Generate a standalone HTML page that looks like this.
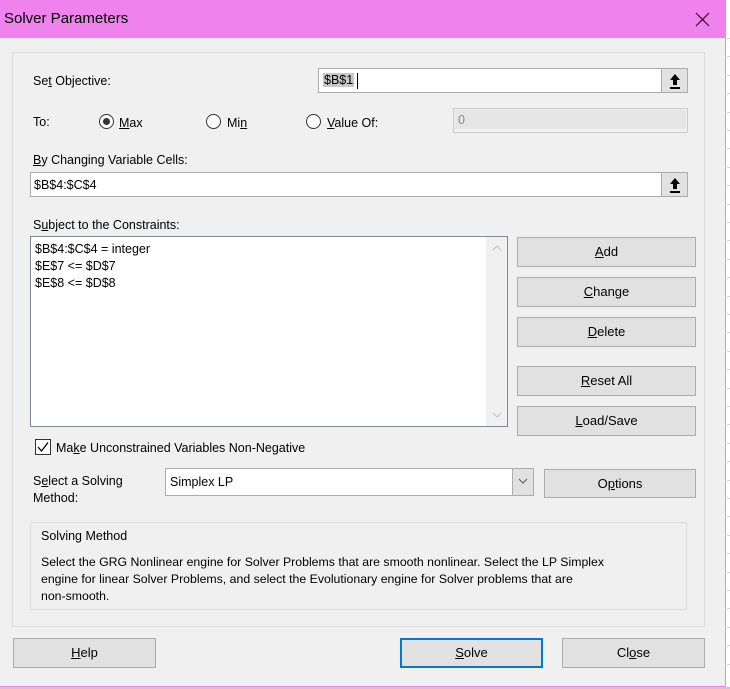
<!DOCTYPE html>
<html><head><meta charset="utf-8"><style>
*{box-sizing:border-box;margin:0;padding:0}
body{width:730px;height:689px;overflow:hidden;background:#fff;font-family:"Liberation Sans",Arial,sans-serif;font-size:12.5px;color:#000;position:relative}
.a{position:absolute}
.dlg{left:0;top:0;width:726px;height:687px;background:#f0f0f0;border-right:1px solid #ee82ee;border-bottom:1px solid #ee82ee}
.title{left:0;top:0;width:726px;height:38px;background:#ef82ec}
.btn{position:absolute;background:#e1e1e1;border:1px solid #adadad;text-align:center;font-size:13px}
.inp{position:absolute;background:#fff;border:1px solid #7a7a7a}
u{text-decoration:underline}
.radio{position:absolute;width:15px;height:15px;border:1px solid #333;border-radius:50%;background:#fff}
.up{position:absolute;right:0;top:0;width:26px;height:100%;background:#e1e1e1;border-left:1px solid #adadad}
.grid{position:absolute;left:727px;width:3px;height:1px;background:#d4d4d4}
</style></head><body>
<div class="a" style="left:0;top:687px;width:730px;height:2px;background:#c8c8c8"></div>
<div class="a dlg"></div>
<div class="a title"></div>
<div class="a" style="left:4px;top:10px;font-size:15px;color:#000">Solver Parameters</div>
<svg class="a" style="left:695px;top:12px" width="15" height="15"><path d="M1 1L14 14M14 1L1 14" stroke="#000" stroke-width="1.2"/></svg>
<div class="a" style="left:12px;top:52px;width:693px;height:575px;border:1px solid #dcdcdc"></div>

<div class="a" style="left:33px;top:74px">Se<u>t</u> Objective:</div>
<div class="inp" style="left:318px;top:68px;width:370px;height:25px;border-color:#adadad">
 <span class="a" style="left:4px;top:4px;background:#c8c8c8;padding:0 1px">$B$1</span><span class="a" style="left:38px;top:4px;width:1px;height:16px;background:#000"></span>
 <div class="up"><svg width="26" height="23"><path d="M13 5L8 11H11V16H15V11H18Z" fill="#000"/><rect x="8" y="18" width="10" height="2" fill="#000"/></svg></div></div>

<div class="a" style="left:33px;top:115px">To:</div>
<div class="radio" style="left:99px;top:114px"><div class="a" style="left:3px;top:3px;width:7px;height:7px;border-radius:50%;background:#333"></div></div>
<div class="a" style="left:119px;top:116px"><u>M</u>ax</div>
<div class="radio" style="left:206px;top:114px"></div>
<div class="a" style="left:227px;top:116px">Mi<u>n</u></div>
<div class="radio" style="left:306px;top:114px"></div>
<div class="a" style="left:327px;top:116px"><u>V</u>alue Of:</div>
<div class="a" style="left:453px;top:108px;width:235px;height:25px;border:1px solid #ccc;background:#f0f0f0"><div class="a" style="left:1px;top:1px;right:1px;bottom:3px;background:#e6e6e6"></div><span class="a" style="left:4px;top:4px;color:#8a8a8a">0</span></div>

<div class="a" style="left:33px;top:153px"><u>B</u>y Changing Variable Cells:</div>
<div class="inp" style="left:30px;top:172px;width:658px;height:25px;border-color:#adadad">
 <span class="a" style="left:3px;top:5px">$B$4:$C$4</span>
 <div class="up"><svg width="26" height="23"><path d="M13 5L8 11H11V16H15V11H18Z" fill="#000"/><rect x="8" y="18" width="10" height="2" fill="#000"/></svg></div></div>

<div class="a" style="left:33px;top:218px">S<u>u</u>bject to the Constraints:</div>
<div class="inp" style="left:30px;top:236px;width:478px;height:191px;border-color:#828790">
 <div class="a" style="left:4px;top:4px;line-height:17px">$B$4:$C$4 = integer<br>$E$7 &lt;= $D$7<br>$E$8 &lt;= $D$8</div>
 <div class="a" style="right:0;top:0;width:21px;height:100%;background:#f0f0f0"></div>
 <svg class="a" style="right:5px;top:8px" width="10" height="6"><path d="M1 5L5 1L9 5" stroke="#c0c0c0" fill="none"/></svg>
 <svg class="a" style="right:5px;bottom:8px" width="10" height="6"><path d="M1 1L5 5L9 1" stroke="#c0c0c0" fill="none"/></svg>
</div>
<div class="btn" style="left:517px;top:237px;width:179px;height:30px;line-height:28px"><u>A</u>dd</div>
<div class="btn" style="left:517px;top:277px;width:179px;height:30px;line-height:28px"><u>C</u>hange</div>
<div class="btn" style="left:517px;top:317px;width:179px;height:30px;line-height:28px"><u>D</u>elete</div>
<div class="btn" style="left:517px;top:366px;width:179px;height:30px;line-height:28px"><u>R</u>eset All</div>
<div class="btn" style="left:517px;top:406px;width:179px;height:30px;line-height:28px"><u>L</u>oad/Save</div>

<div class="a" style="left:35px;top:439px;width:16px;height:16px;border:1px solid #333;background:#fff"><svg width="14" height="14"><path d="M2 7L5.5 11L12 2.5" stroke="#000" stroke-width="1.3" fill="none"/></svg></div>
<div class="a" style="left:56px;top:441px">Ma<u>k</u>e Unconstrained Variables Non-Negative</div>

<div class="a" style="left:33px;top:473px;line-height:17px">S<u>e</u>lect a Solving<br>Method:</div>
<div class="inp" style="left:165px;top:468px;width:369px;height:28px;border-color:#adadad">
 <span class="a" style="left:4px;top:6px">Simplex LP</span>
 <div class="a" style="right:0;top:0;width:21px;height:100%;background:#e1e1e1;border-left:1px solid #adadad"><svg width="20" height="26"><path d="M6 10L10 14L14 10" stroke="#555" fill="none"/></svg></div></div>
<div class="btn" style="left:544px;top:469px;width:152px;height:29px;line-height:27px">O<u>p</u>tions</div>

<div class="a" style="left:30px;top:522px;width:657px;height:88px;border:1px solid #dcdcdc"></div>
<div class="a" style="left:41px;top:529px;font-size:12.5px">Solving Method</div>
<div class="a" style="left:41px;top:554px;font-size:12.3px;line-height:17px;white-space:nowrap">Select the GRG Nonlinear engine for Solver Problems that are smooth nonlinear. Select the LP Simplex<br>engine for linear Solver Problems, and select the Evolutionary engine for Solver problems that are<br>non-smooth.</div>

<div class="btn" style="left:13px;top:638px;width:143px;height:30px;line-height:28px"><u>H</u>elp</div>
<div class="btn" style="left:400px;top:638px;width:143px;height:30px;line-height:26px;border:2px solid #0078d7"><u>S</u>olve</div>
<div class="btn" style="left:562px;top:638px;width:143px;height:30px;line-height:28px">Cl<u>o</u>se</div>

<div class="grid" style="top:38px"></div><div class="grid" style="top:56px"></div><div class="grid" style="top:75px"></div><div class="grid" style="top:93px"></div><div class="grid" style="top:112px"></div><div class="grid" style="top:130px"></div><div class="grid" style="top:148px"></div><div class="grid" style="top:167px"></div><div class="grid" style="top:185px"></div><div class="grid" style="top:204px"></div><div class="grid" style="top:222px"></div><div class="grid" style="top:240px"></div><div class="grid" style="top:259px"></div><div class="grid" style="top:277px"></div><div class="grid" style="top:296px"></div><div class="grid" style="top:314px"></div><div class="grid" style="top:332px"></div><div class="grid" style="top:351px"></div><div class="grid" style="top:369px"></div><div class="grid" style="top:388px"></div><div class="grid" style="top:406px"></div><div class="grid" style="top:424px"></div><div class="grid" style="top:443px"></div><div class="grid" style="top:461px"></div><div class="grid" style="top:480px"></div><div class="grid" style="top:498px"></div><div class="grid" style="top:516px"></div><div class="grid" style="top:535px"></div><div class="grid" style="top:553px"></div><div class="grid" style="top:572px"></div><div class="grid" style="top:590px"></div><div class="grid" style="top:608px"></div><div class="grid" style="top:627px"></div><div class="grid" style="top:645px"></div><div class="grid" style="top:664px"></div>
</body></html>
